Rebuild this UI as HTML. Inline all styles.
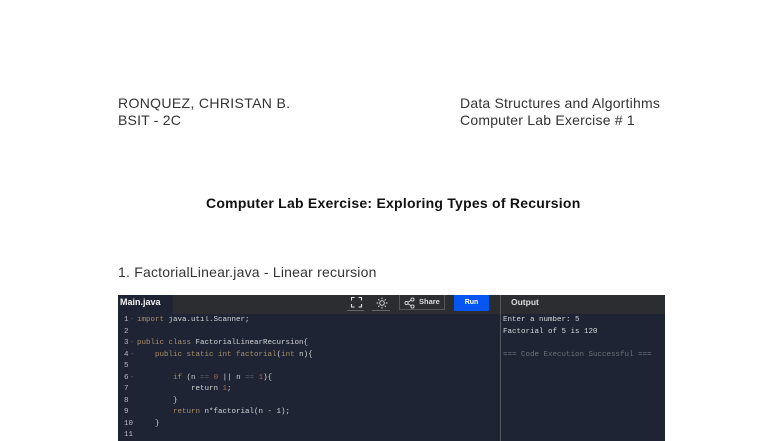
<!DOCTYPE html>
<html><head><meta charset="utf-8"><style>
html,body{margin:0;padding:0;background:#fff;width:784px;height:441px;overflow:hidden}
body{position:relative;font-family:"Liberation Sans",sans-serif}
.t{position:absolute;white-space:pre;color:#333;font-size:14px;line-height:16px;letter-spacing:.21px}
.b{font-weight:bold;color:#111;font-size:14px;letter-spacing:.24px}
#p{position:absolute;left:118px;top:295px;width:547px;height:146px;background:#1e2433;overflow:hidden}
#h{position:absolute;left:0;top:0;width:547px;height:19px;background:#2c2d30}
#tab{position:absolute;left:0;top:0;width:55px;height:19px;background:#1e2433;color:#f2f2f2;font-size:9px;font-weight:bold;line-height:14px;padding-left:2px;box-sizing:border-box;filter:blur(.25px)}
#run{position:absolute;left:336px;top:0;width:35px;height:16px;background:#0556f3;color:#fff;font-size:7px;font-weight:bold;text-align:center;line-height:15px}
#sh{position:absolute;left:281px;top:0;width:46px;height:15px;border:1px solid #55565a;border-top:0;color:#ddd;font-size:7.5px;font-weight:bold;line-height:14px;box-sizing:border-box;padding-left:19px}
#out{position:absolute;left:393px;top:0;color:#ddd;font-size:8.5px;font-weight:bold;line-height:14px;filter:blur(.25px)}
#d{position:absolute;left:382px;top:0;width:1px;height:146px;background:#55585f}
.c{position:absolute;font:7.5px/11.5px "Liberation Mono",monospace;color:#d4d6da;white-space:pre;filter:blur(.35px)}
.n{color:#b9bcc4}.k{color:#a88f6a}.o{color:#555a66}.r{color:#a8684f}
</style></head><body>
<div class="t" style="left:118px;top:95px;letter-spacing:.35px">RONQUEZ, CHRISTAN B.</div>
<div class="t" style="left:118px;top:112px;letter-spacing:.2px">BSIT - 2C</div>
<div class="t" style="left:460px;top:95px">Data Structures and Algortihms</div>
<div class="t" style="left:460px;top:112px">Computer Lab Exercise # 1</div>
<div class="t b" style="left:206px;top:195px">Computer Lab Exercise: Exploring Types of Recursion</div>
<div class="t" style="left:118px;top:264px">1. FactorialLinear.java - Linear recursion</div>
<div id="p">
<div id="h"></div>
<div id="tab">Main.java</div>
<svg style="position:absolute;left:232px;top:1px" width="14" height="14" fill="none" stroke="#e4e4e4" stroke-width="1.1"><path d="M1.5 4.5V1.5H4.5M8.5 1.5H11.5V4.5M11.5 8V11H8.5M4.5 11H1.5V8"/></svg>
<div style="position:absolute;left:229px;top:15px;width:17px;height:1px;background:#666"></div>
<svg style="position:absolute;left:256px;top:1px" width="16" height="15" fill="none" stroke="#d8d8d8" stroke-width=".9"><circle cx="8" cy="7" r="2.3"/><path d="M8 1.5V3.3M8 10.7V12.5M2.5 7H4.3M11.7 7H13.5M4.2 3.2L5.4 4.4M10.6 9.6L11.8 10.8M4.2 10.8L5.4 9.6M10.6 4.4L11.8 3.2"/></svg>
<div style="position:absolute;left:254px;top:15px;width:18px;height:1px;background:#666"></div>
<div id="sh">Share</div>
<svg style="position:absolute;left:286px;top:2px" width="12" height="12" fill="none" stroke="#ddd" stroke-width=".9"><circle cx="2.5" cy="6" r="1.6"/><circle cx="8.5" cy="2.5" r="1.6"/><circle cx="8.5" cy="9.5" r="1.6"/><path d="M4 5.2L7 3.3M4 6.8L7 8.7"/></svg>
<div id="run">Run</div>
<div id="out">Output</div>
<div id="d"></div>
<div class="c n" style="left:6px;top:20px">1
2
3
4
5
6
7
8
9
10
11</div>
<div class="c o" style="left:12px;top:20px">-

-
-

-</div>
<div class="c" style="left:19px;top:20px"><span class="k">import</span> java.util.Scanner;

<span class="k">public class</span> FactorialLinearRecursion{
    <span class="k">public static int</span> <span class="k">factorial</span>(<span class="k">int</span> n){

        <span class="k">if</span> (n <span class="o">== </span><span class="r">0</span> || n <span class="o">== </span><span class="r">1</span>){
            return <span class="r">1</span>;
        }
        <span class="k">return</span> n*factorial(n - 1);
    }
</div>
<div class="c" style="left:385px;top:20px;color:#d6d8dc">Enter a number: 5
Factorial of 5 is 120

<span style="color:#6d717b">=== Code Execution Successful ===</span></div>
</div>
</body></html>
